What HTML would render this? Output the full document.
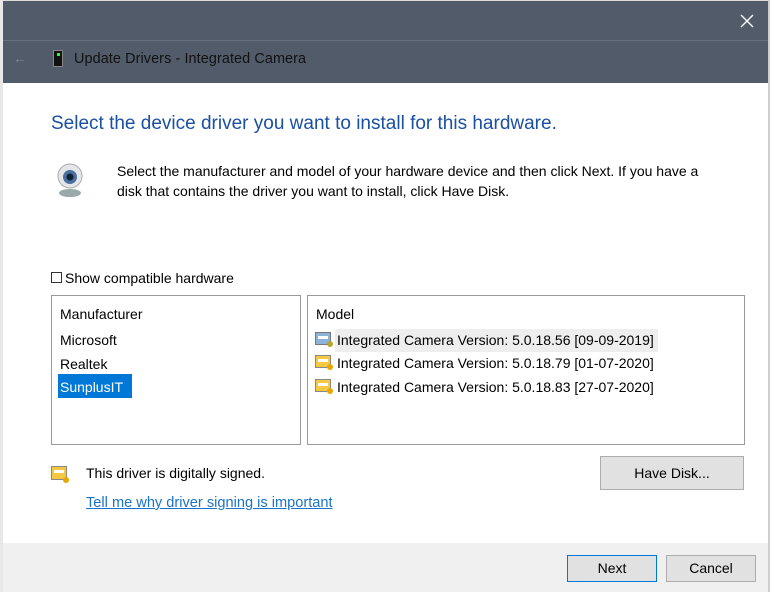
<!DOCTYPE html>
<html><head><style>
body{margin:0;width:770px;height:592px;position:relative;background:#fff;font-family:"Liberation Sans",sans-serif;font-size:14px;color:#000;overflow:hidden}
.a{position:absolute}
.box{position:absolute;border:1px solid #9a9a9a;background:#fff}
.btn{position:absolute;background:#e1e1e1;border:1px solid #adadad;text-align:center;box-sizing:border-box;font-size:14px}
.row{position:absolute;left:8px;white-space:nowrap}
</style></head><body>
<div class="a" style="left:0;top:0;width:770px;height:3px;background:#dcdcdc"></div>
<div class="a" style="left:0;top:0;width:3px;height:592px;background:#e8e8e8"></div>
<div class="a" style="left:3px;top:1px;width:765px;height:82px;background:#515b69"></div>
<div class="a" style="left:3px;top:40px;width:765px;height:1px;background:#677182"></div>
<div class="a" style="left:768px;top:0;width:2px;height:592px;background:#cfcfcf"></div>
<svg class="a" style="left:740px;top:14px" width="14" height="14"><path d="M1 1L13 13M13 1L1 13" stroke="#fff" stroke-width="1.4"/></svg>
<div class="a" style="left:13px;top:50px;color:#7d8694;font-size:14px">←</div>
<div class="a" style="left:53px;top:50px;width:10px;height:17px;background:#111;border:1px solid #888;box-sizing:border-box"></div>
<div class="a" style="left:57px;top:53px;width:3px;height:3px;background:#2f2"></div>
<div class="a" style="left:74px;top:51px;color:#111;font-size:14.4px;letter-spacing:0.1px">Update Drivers - Integrated Camera</div>
<div class="a" style="left:51px;top:113px;color:#1a4fa2;font-size:19px">Select the device driver you want to install for this hardware.</div>
<svg class="a" style="left:55px;top:160px" width="30" height="38"><ellipse cx="15" cy="33" rx="11" ry="4" fill="#9aa"/><circle cx="15" cy="16" r="12" fill="#e4e6e8" stroke="#aaa"/><circle cx="15" cy="17" r="7" fill="#4a6fa0"/><circle cx="15" cy="17" r="3.5" fill="#123"/></svg>
<div class="a" style="left:117px;top:161px;width:600px;line-height:20px">Select the manufacturer and model of your hardware device and then click Next. If you have a disk that contains the driver you want to install, click Have Disk.</div>
<div class="a" style="left:51px;top:272px;width:9px;height:9px;border:1px solid #333;background:#fff"></div>
<div class="a" style="left:65px;top:270px">Show compatible hardware</div>
<div class="box" style="left:51px;top:295px;width:248px;height:148px">
<div class="row" style="top:10px">Manufacturer</div>
<div class="row" style="top:36px">Microsoft</div>
<div class="row" style="top:60px">Realtek</div>
<div class="a" style="left:6px;top:78px;width:74px;height:24px;background:#0078d7"></div>
<div class="row" style="top:83px;color:#fff">SunplusIT</div>
</div>
<div class="box" style="left:307px;top:295px;width:436px;height:148px">
<div class="row" style="top:10px">Model</div>
<div class="a" style="left:27px;top:33px;width:323px;height:23px;background:#eeeeee"></div>
<svg class="a" style="left:7px;top:36px" width="18" height="16"><rect x=".5" y=".5" width="15" height="12" fill="#8db4d8" stroke="#777"/><rect x="3" y="4" width="10" height="3" fill="#fff"/><circle cx="15" cy="12" r="3" fill="#b8a430"/></svg>
<div class="row" style="left:29px;top:36px">Integrated Camera Version: 5.0.18.56 [09-09-2019]</div>
<svg class="a" style="left:7px;top:59px" width="18" height="16"><rect x=".5" y=".5" width="15" height="12" fill="#f5c842" stroke="#888"/><rect x="3" y="4" width="10" height="3" fill="#fff"/><circle cx="15" cy="12" r="3" fill="#e6a800"/></svg>
<div class="row" style="left:29px;top:59px">Integrated Camera Version: 5.0.18.79 [01-07-2020]</div>
<svg class="a" style="left:7px;top:83px" width="18" height="16"><rect x=".5" y=".5" width="15" height="12" fill="#f5c842" stroke="#888"/><rect x="3" y="4" width="10" height="3" fill="#fff"/><circle cx="15" cy="12" r="3" fill="#e6a800"/></svg>
<div class="row" style="left:29px;top:83px">Integrated Camera Version: 5.0.18.83 [27-07-2020]</div>
</div>
<svg class="a" style="left:51px;top:466px" width="18" height="18"><rect x=".5" y=".5" width="15" height="13" fill="#f5c842" stroke="#888"/><rect x="3" y="4" width="10" height="3" fill="#fff"/><circle cx="15" cy="14" r="3" fill="#e6a800"/></svg>
<div class="a" style="left:86px;top:465px">This driver is digitally signed.</div>
<div class="a" style="left:86px;top:495px;color:#1a73c9;text-decoration:underline;font-size:14.6px">Tell me why driver signing is important</div>
<div class="btn" style="left:600px;top:456px;width:144px;height:34px;line-height:32px">Have Disk...</div>
<div class="a" style="left:3px;top:543px;width:765px;height:49px;background:#f0f0f0"></div>
<div class="btn" style="left:567px;top:555px;width:90px;height:27px;line-height:25px;border:1px solid #0078d7">Next</div>
<div class="btn" style="left:666px;top:555px;width:90px;height:27px;line-height:25px">Cancel</div>
</body></html>
